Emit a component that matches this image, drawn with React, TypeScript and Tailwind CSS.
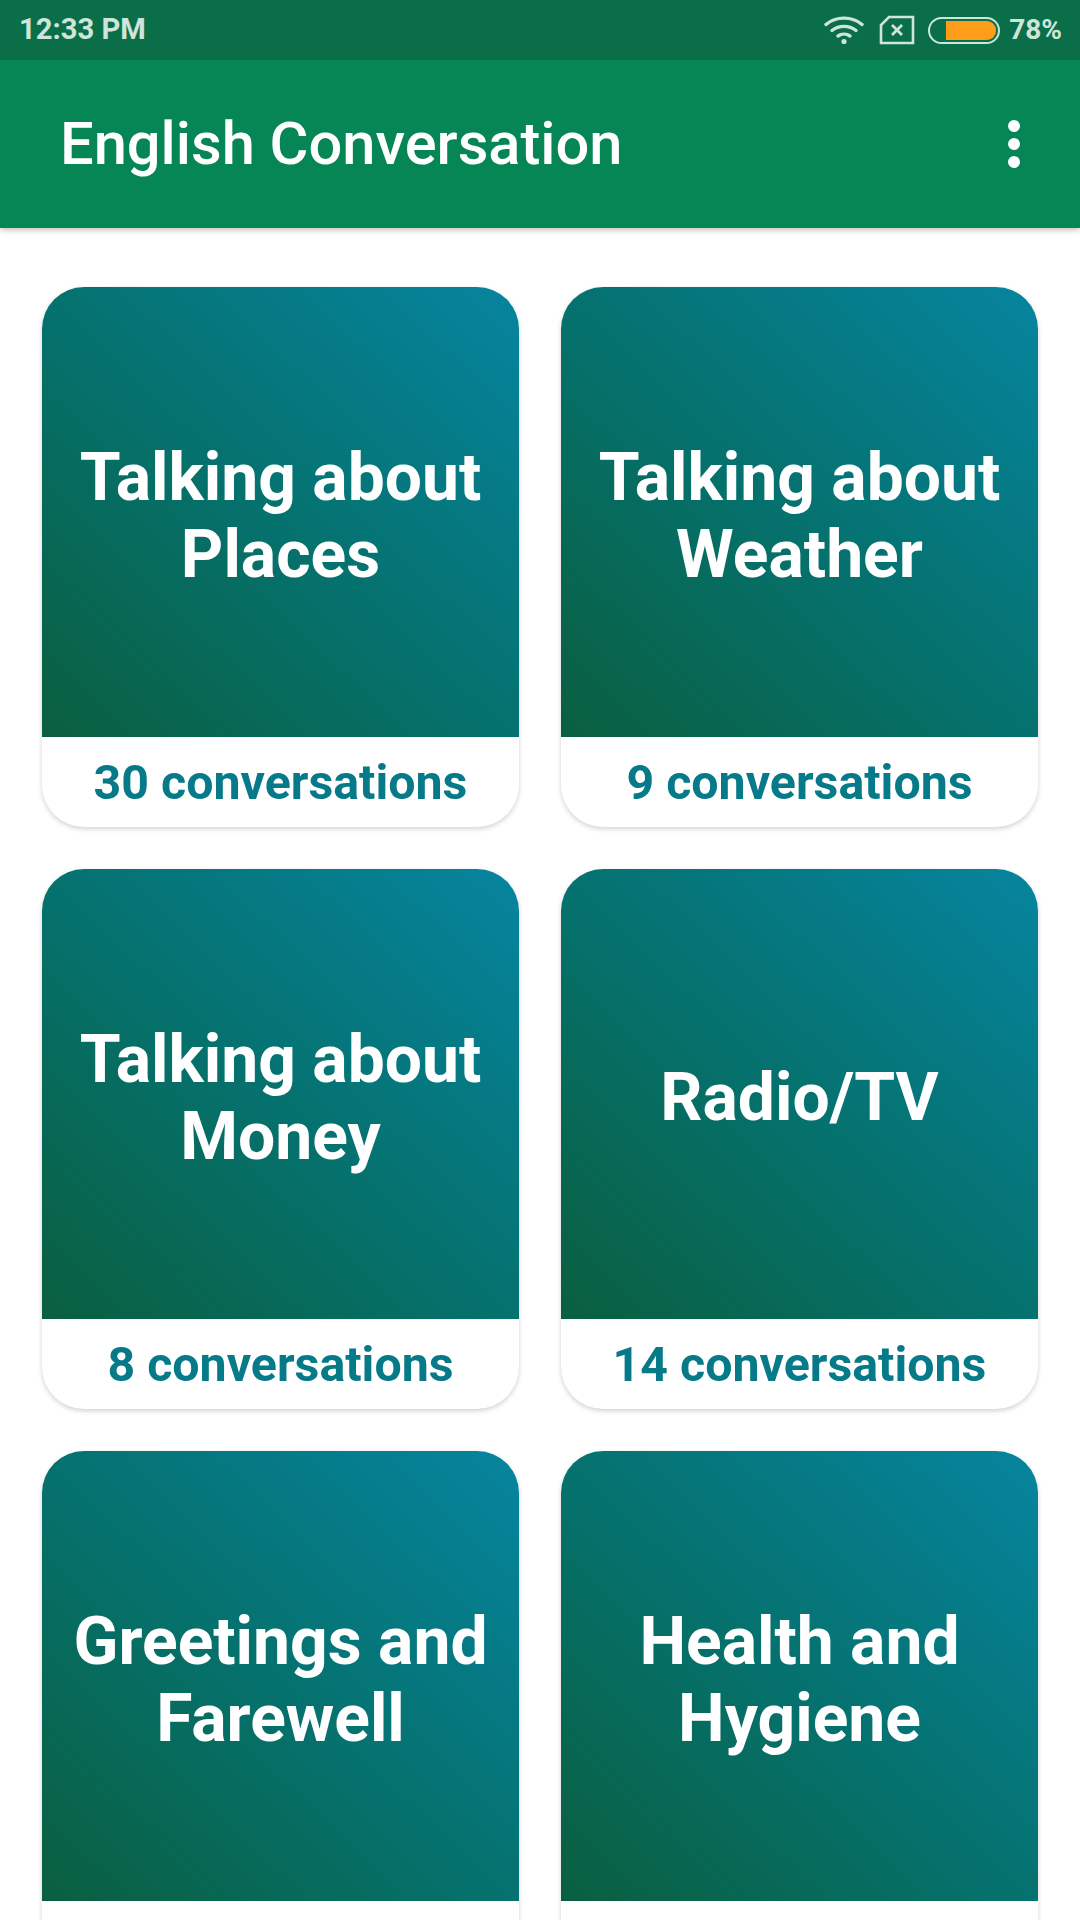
const topics = [
  { title: ["Talking about", "Places"], count: "30 conversations" },
  { title: ["Talking about", "Weather"], count: "9 conversations" },
  { title: ["Talking about", "Money"], count: "8 conversations" },
  { title: ["Radio/TV"], count: "14 conversations" },
  { title: ["Greetings and", "Farewell"], count: "" },
  { title: ["Health and", "Hygiene"], count: "" },
];

const StatusIcons = () => (
  <div className="flex items-center">
    {/* wifi */}
    <svg width="40" height="30" viewBox="0 0 40 30" fill="none" stroke="#cfe5da" strokeWidth="3.4" strokeLinecap="round">
      <path d="M2 9.5C12 1 28 1 38 9.5" />
      <path d="M8 15.5C15 10 25 10 32 15.5" />
      <path d="M14 21C17.5 18.5 22.5 18.5 26 21" />
      <circle cx="20" cy="26.5" r="2.6" fill="#cfe5da" stroke="none" />
    </svg>
    {/* no sim */}
    <svg className="ml-[15px]" width="36" height="30" viewBox="0 0 36 30" fill="none" stroke="#cfe5da">
      <path d="M10 2H34V28H2V10Z" strokeWidth="2.6" />
      <path d="M13 10L23 20M23 10L13 20" strokeWidth="2.8" />
    </svg>
    {/* battery */}
    <div className="ml-[13px] flex h-[27px] w-[72px] justify-end rounded-full border-2 border-[#cfe5da] p-[2px]">
      <div className="h-full w-[50px] rounded-r-[9px] bg-[#ff9c1a]" />
    </div>
    <span className="ml-[9px] text-[28px] font-bold text-[#cfe5da]">78%</span>
  </div>
);

const TopicCard = ({ title, count }: { title: string[]; count: string }) => (
  <div className="overflow-hidden rounded-[42px] bg-white shadow-[0_2px_5px_rgba(0,0,0,0.18)]">
    <div className="flex h-[450px] flex-col items-center justify-center bg-gradient-to-tr from-[#0a5f3f] to-[#07849f] pt-[7px] text-center text-[66px] leading-[77px] font-bold text-white">
      {title.map((line) => (
        <div key={line}>{line}</div>
      ))}
    </div>
    <div className="flex h-[90px] items-center justify-center pt-[2px] text-[48.3px] font-bold text-[#067a88]">
      {count}
    </div>
  </div>
);

export default function App() {
  return (
    <div className="h-[1920px] w-[1080px] overflow-hidden bg-white font-['Roboto',sans-serif]">
      <div className="relative z-10 shadow-[0_2px_6px_rgba(0,0,0,0.25)]">
        <div className="flex h-[60px] items-center justify-between bg-[#0a6f49] pr-[18px] pl-[19px]">
          <span className="text-[29.2px] font-bold text-[#cfe5da]">12:33 PM</span>
          <StatusIcons />
        </div>
        <div className="flex h-[168px] items-center justify-between bg-[#068654] pr-[60px] pl-[60px]">
          <h1 className="pt-[2px] text-[59.6px] font-medium text-white">English Conversation</h1>
          <div className="flex flex-col gap-[6px]">
            <span className="h-[12px] w-[12px] rounded-full bg-white" />
            <span className="h-[12px] w-[12px] rounded-full bg-white" />
            <span className="h-[12px] w-[12px] rounded-full bg-white" />
          </div>
        </div>
      </div>
      <div className="grid grid-cols-2 gap-x-[42px] gap-y-[42px] pt-[59px] pr-[42px] pl-[42px]">
        {topics.map((t) => (
          <TopicCard key={t.title.join(" ")} title={t.title} count={t.count} />
        ))}
      </div>
    </div>
  );
}
